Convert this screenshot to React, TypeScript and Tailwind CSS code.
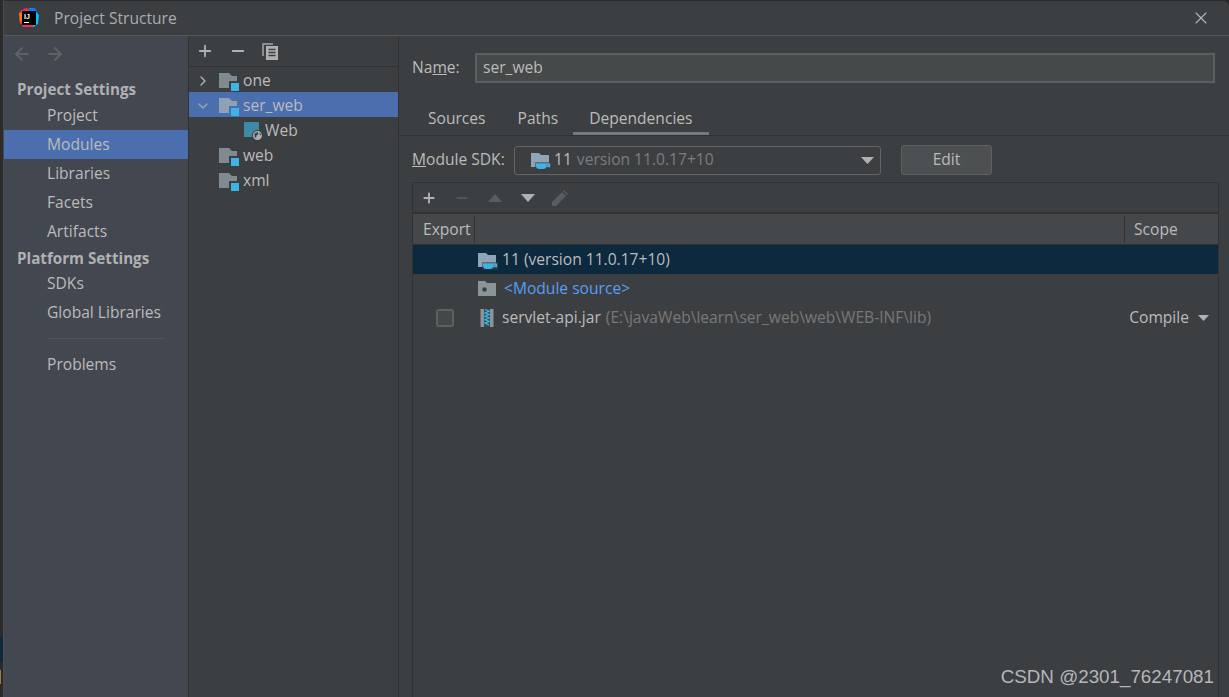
import React from 'react';
import { ChevronDown, ChevronRight, Minus, Plus, X, ArrowLeft, ArrowRight } from 'lucide-react';

const font = '[font-family:"Open_Sans","Noto_Sans",sans-serif]';

// Grey module folder with the small blue square in the corner
function ModuleIcon({ selected }: { selected?: boolean }) {
  return (
    <svg width="20" height="20" viewBox="0 0 20 20" className="shrink-0">
      <path d="M0 2h10l3 3h5v12H0z" fill={selected ? '#8fa1b5' : '#7f8b91'} />
      <rect x="10" y="10" width="10" height="10" fill={selected ? '#4b6eaf' : '#3c3f41'} />
      <rect x="12" y="12" width="8" height="8" fill="#3db3e6" />
    </svg>
  );
}

function SdkIcon() {
  return (
    <svg width="20" height="20" viewBox="0 0 20 20" className="shrink-0">
      <path d="M0 3h8l2 2h8v12H0z" fill="#8fa4b5" />
      <path d="M4 12h16v8H4z" fill="#3c3f41" opacity="0.55" />
      <path d="M5 13.5h10.5v2a3.5 3.5 0 0 1-3.5 3.5H8.5A3.5 3.5 0 0 1 5 15.5z" fill="#3db3e6" />
      <path d="M15.5 14.2h3v2.3h-3" fill="none" stroke="#3db3e6" strokeWidth="1.4" />
    </svg>
  );
}

function SourceIcon() {
  return (
    <svg width="20" height="20" viewBox="0 0 20 20" className="shrink-0">
      <path d="M0 2h7l2 2h9v13H0z" fill="#8a9499" />
      <circle cx="6.5" cy="10.5" r="2.2" fill="#3c3f41" />
    </svg>
  );
}

function JarIcon() {
  return (
    <svg width="14" height="20" viewBox="0 0 14 20" className="shrink-0">
      <rect x="0.5" y="1" width="13" height="18" fill="#8a9499" />
      <rect x="4" y="1" width="6" height="18" fill="#3c4a52" />
      <path d="M5 1.5l4 1.7-4 1.7 4 1.7-4 1.7 4 1.7-4 1.7 4 1.7-4 1.7 4 1.7" fill="none" stroke="#3db3e6" strokeWidth="1.3" />
    </svg>
  );
}

function WebIcon() {
  return (
    <svg width="19" height="19" viewBox="0 0 19 19" className="shrink-0">
      <rect x="0" y="0" width="15" height="15" fill="#3d8aa6" />
      <circle cx="13.5" cy="13.5" r="5.5" fill="#3c3f41" />
      <circle cx="13.5" cy="13.5" r="4.5" fill="#a9b2b8" />
      <path d="M10.5 11.5l3-1.5 1 2-2 1.5-.5 3-1.5-2.5zM15.5 10.5l2 2-1.500 1z" fill="#3c3f41" />
    </svg>
  );
}

function CopyIcon() {
  return (
    <svg width="17" height="17" viewBox="0 0 17 17" className="shrink-0">
      <path d="M0 0h11v2H2v11H0z" fill="#8a8d8f" />
      <rect x="4" y="3" width="12" height="14" fill="#afb1b3" />
      <path d="M6.500 6.500h7M6.500 9.500h7M6.500 12.500h7" stroke="#3c3f41" strokeWidth="1.300" />
    </svg>
  );
}

function AppLogo() {
  return (
    <svg width="20" height="20" viewBox="0 0 20 20" className="shrink-0">
      <path d="M0 5 8 1 5 10 1 16z" fill="#f97a12" />
      <path d="M1 3l6-3 5 3-6 7z" fill="#fe2857" />
      <path d="M9 0h7l3 6-3 6z" fill="#087cfa" />
      <path d="M1 14l5-5 10 10H4z" fill="#fe2857" />
      <path d="M15 3l5 4-1 9-5 3z" fill="#07c3f2" />
      <rect x="3" y="3" width="14" height="14" fill="#000" />
      <rect x="5" y="14" width="5" height="1" fill="#fff" />
      <text x="5" y="11" fontSize="7" fontWeight="700" fill="#fff" fontFamily="Liberation Sans">IJ</text>
    </svg>
  );
}

function NavItem({ label, active }: { label: string; active?: boolean }) {
  return (
    <div className={`h-[29px] pl-[43px] flex items-center ${active ? 'bg-[#4b6eaf]' : ''}`}>{label}</div>
  );
}

function TreeRow({ label, open, selected, arrow }: { label: string; open?: boolean; selected?: boolean; arrow?: boolean }) {
  return (
    <div className={`h-[25px] pt-[3px] flex items-center ${selected ? 'bg-[#4b6eaf]' : ''}`}>
      <span className="w-[30px] pl-[6px] flex items-center">
        {arrow && (open ? <ChevronDown size={16} color="#9aa7b0" /> : <ChevronRight size={16} color="#afb1b3" />)}
      </span>
      <ModuleIcon selected={selected} />
      <span className="ml-[4px]">{label}</span>
    </div>
  );
}

export default function App() {
  return (
    <div className={`relative w-[1229px] h-[697px] overflow-hidden flex bg-[#2b2b2b] text-[#bbbbbb] text-[15.6px] ${font}`}>
      {/* sliver of the editor behind the dialog */}
      <div className="w-[4px] shrink-0 bg-[#2b2b2b] border-r border-[#4a4d4f] flex flex-col">
        <div className="mt-[637px] h-[25px] bg-[#0d293e]" />
        <div className="mt-[8px] h-[14px] w-[1px] bg-[#9a7a4e]" />
      </div>

      <div className="flex-1 flex flex-col mt-[1px] bg-[#3c3f41] rounded-tr-[6px] min-w-0">
        {/* Title bar */}
        <div className="h-[35px] shrink-0 flex items-center border-b border-[#555759] pl-[15px] pr-[18px]">
          <AppLogo />
          <span className="ml-[15px] pt-[2px] text-[#a9adb0]">Project Structure</span>
          <X size={20} strokeWidth={1.3} color="#b5b8ba" className="ml-auto" />
        </div>

        <div className="flex-1 flex min-h-0">
          {/* Left navigation */}
          <div className="w-[185px] shrink-0 bg-[#434750] border-r border-[#323232]">
            <div className="h-[36px] flex items-center pl-[8px] gap-[13px]">
              <ArrowLeft size={20} strokeWidth={2.4} color="#5f6265" />
              <ArrowRight size={20} strokeWidth={2.4} color="#5f6265" />
            </div>
            <div className="h-[29px] pl-[13px] flex items-end text-[15.2px] font-bold text-[#afb1b3]">Project Settings</div>
            <NavItem label="Project" />
            <NavItem label="Modules" active />
            <NavItem label="Libraries" />
            <NavItem label="Facets" />
            <NavItem label="Artifacts" />
            <div className="h-[23px] pt-[1px] pl-[13px] flex items-center text-[15.2px] font-bold text-[#afb1b3]">Platform Settings</div>
            <NavItem label="SDKs" />
            <NavItem label="Global Libraries" />
            <div className="ml-[43px] mr-[23px] mt-[11px] h-px bg-[#50535a]" />
            <div className="mt-[11px]"><NavItem label="Problems" /></div>
          </div>

          {/* Module tree */}
          <div className="w-[210px] shrink-0 border-r border-[#323232]">
            <div className="h-[31px] flex items-center border-b border-[#323232] pl-[7px] gap-[15px] text-[#afb1b3]">
              <Plus size={18} strokeWidth={2.4} />
              <Minus size={18} strokeWidth={2.4} />
              <CopyIcon />
            </div>
            <TreeRow label="one" arrow />
            <TreeRow label="ser_web" arrow open selected />
            <div className="h-[25px] pt-[3px] pl-[55px] flex items-center">
              <WebIcon />
              <span className="ml-[2px]">Web</span>
            </div>
            <TreeRow label="web" />
            <TreeRow label="xml" />
          </div>

          {/* Module details */}
          <div className="flex-1 min-w-0 flex flex-col">
            <div className="h-[62px] pt-[2px] shrink-0 flex items-center pl-[13px] pr-[14px]">
              <span className="w-[63px]">Na<span className="underline">m</span>e:</span>
              <div className="flex-1 h-[30px] px-[6px] flex items-center bg-[#45494a] border-2 border-[#5b5f61]">ser_web</div>
            </div>
            <div className="h-[38px] shrink-0 flex items-end pl-[13px] border-b border-[#323232]">
              <div className="h-[33px] px-[16px] flex items-center">Sources</div>
              <div className="h-[33px] pl-[16px] pr-[15px] flex items-center">Paths</div>
              <div className="h-[33px] px-[16px] flex items-center border-b-[3px] border-[#747a80] pt-[3px]">Dependencies</div>
            </div>
            <div className="h-[46px] pt-[2px] shrink-0 flex items-center pl-[13px]">
              <span className="w-[102px]"><span className="underline">M</span>odule SDK:</span>
              <div className="w-[367px] h-[29px] pl-[16px] pr-[6px] flex items-center gap-[3px] border border-[#646464] rounded-[3px]">
                <SdkIcon />
                <span>11</span>
                <span className="ml-[2px] text-[#7a7d7f]">version 11.0.17+10</span>
                <svg width="13" height="7" viewBox="0 0 13 7" className="ml-auto"><path d="M0 0h13L6.500 7z" fill="#afb1b3" /></svg>
              </div>
              <div className="ml-[20px] w-[91px] h-[30px] flex items-center justify-center bg-[#4c5052] border border-[#5e6060] rounded-[3px]">Edit</div>
            </div>

            {/* Dependencies table */}
            <div className="flex-1 ml-[13px] mr-[10px] border-l border-r border-t border-[#323232] flex flex-col min-h-0">
              <div className="h-[31px] pt-[1px] shrink-0 flex items-center pl-[8px] gap-[17px] border-b-2 border-[#323232]">
                <Plus size={16} strokeWidth={2.8} color="#afb1b3" />
                <Minus size={16} strokeWidth={2.6} color="#5a5d5f" />
                <svg width="16" height="9" viewBox="0 0 16 9"><path d="M8 0l7 8H1z" fill="#5a5d5f" /></svg>
                <svg width="16" height="9" viewBox="0 0 16 9"><path d="M1 0h14L8 8z" fill="#afb1b3" /></svg>
                <svg width="17" height="17" viewBox="0 0 17 17" className="-ml-[2px]"><path d="M1 12L11 2l4 4L5 16H1zM12 1l1-1 4 4-1 1z" fill="#5a5d5f" /></svg>
              </div>
              <div className="h-[31px] shrink-0 flex items-center bg-[#45484a] border-b border-[#323232]">
                <div className="w-[62px] h-[27px] pt-[2px] pl-[10px] flex items-center border-r border-[#323232]">Export</div>
                <div className="flex-1" />
                <div className="w-[94px] h-[27px] pt-[2px] pl-[9px] flex items-center border-l border-[#323232]">Scope</div>
              </div>
              <div className="h-[29px] shrink-0 bg-[#0d293e] pl-[65px] flex items-center gap-[4px]">
                <SdkIcon />
                <span>11 (version 11.0.17+10)</span>
              </div>
              <div className="h-[29px] shrink-0 pl-[65px] flex items-center gap-[6px]">
                <SourceIcon />
                <span className="text-[#589df6]">&lt;Module source&gt;</span>
              </div>
              <div className="h-[29px] shrink-0 flex items-center">
                <div className="w-[18px] h-[18px] ml-[23px] border-2 border-[#5e6060] rounded-[3px] bg-[#43494a]" />
                <span className="ml-[26px]"><JarIcon /></span>
                <span className="ml-[8px]">servlet-api.jar</span>
                <span className="ml-[5px] text-[#787878]">(E:\javaWeb\learn\ser_web\web\WEB-INF\lib)</span>
                <span className="ml-auto">Compile</span>
                <svg width="11" height="6" viewBox="0 0 11 6" className="ml-[9px] mr-[9px]"><path d="M0 0h11L5.500 6z" fill="#afb1b3" /></svg>
              </div>
            </div>
          </div>
        </div>
      </div>

      {/* Watermark over the screenshot */}
      <span className="absolute right-[15px] bottom-[6px] text-[18.8px] text-[#b4b7b9] [font-family:'Liberation_Sans',sans-serif]">CSDN @2301_76247081</span>
    </div>
  );
}
